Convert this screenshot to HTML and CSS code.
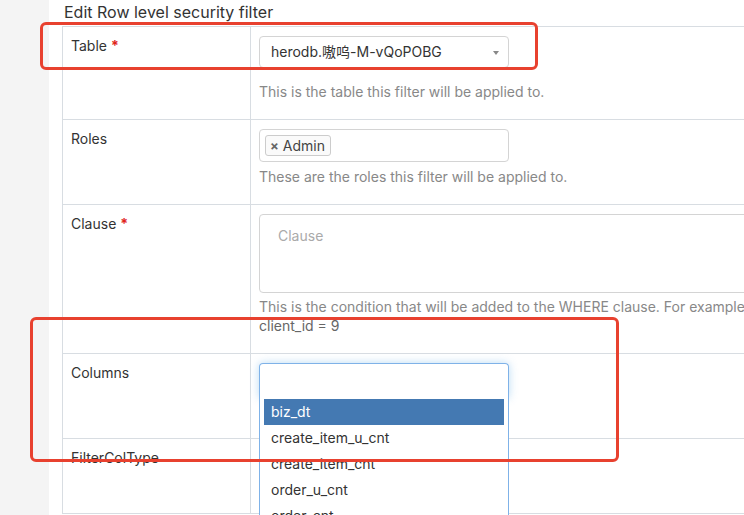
FILE: index.html
```html
<!DOCTYPE html>
<html lang="en">
<head>
    <meta charset="UTF-8">
    <meta name="viewport" content="width=device-width, initial-scale=1.0">
    <title>Edit Row level security filter</title>
    <link rel="stylesheet" href="styles.css">
</head>
<body>
    <div class="layout">
        <div class="sidebar"></div>
        <div class="main">
            <h4 class="title">Edit Row level security filter</h4>
            <table class="form-table">
                <colgroup>
                    <col class="col-label">
                    <col>
                </colgroup>
                <tr>
                    <th>Table <span class="req">*</span></th>
                    <td>
                        <div class="select">
                            <span>herodb.嗷呜-M-vQoPOBG</span>
                            <span class="caret"></span>
                        </div>
                        <p class="help help-table">This is the table this filter will be applied to.</p>
                    </td>
                </tr>
                <tr>
                    <th>Roles</th>
                    <td>
                        <div class="multi">
                            <span class="tag"><span class="tag-x">×</span>Admin</span>
                        </div>
                        <p class="help">These are the roles this filter will be applied to.</p>
                    </td>
                </tr>
                <tr>
                    <th>Clause <span class="req">*</span></th>
                    <td>
                        <div class="textarea">Clause</div>
                        <p class="help help-clause">
                            <span class="nowrap">This is the condition that will be added to the WHERE clause. For example, to only return rows for a particular client, you might define a regular filter with the clause</span><br>
                            <span class="code">client_id = 9</span>
                        </p>
                    </td>
                </tr>
                <tr>
                    <th>Columns</th>
                    <td>
                        <div class="multi-open">
                            <ul class="results">
                                <li class="active">biz_dt</li>
                                <li>create_item_u_cnt</li>
                                <li>create_item_cnt</li>
                                <li>order_u_cnt</li>
                                <li>order_cnt</li>
                                <li>pay_u_cnt</li>
                            </ul>
                        </div>
                    </td>
                </tr>
                <tr>
                    <th>FilterColType</th>
                    <td>
                        <div class="select select-last">
                            <span></span>
                            <span class="caret"></span>
                        </div>
                    </td>
                </tr>
            </table>
        </div>

        <!-- annotation boxes drawn over the screenshot -->
        <div class="mark mark-table"></div>
        <div class="mark mark-columns"></div>
    </div>
</body>
</html>
```

FILE: styles.css
```css
html, body {
    margin: 0;
    padding: 0;
    overflow: hidden;
    background: #fff;
}
body {
    font-family: Inter, "Noto Sans CJK SC", sans-serif;
    color: #333;
}
.layout {
    position: relative;
    display: flex;
    min-height: 515px;
}
.sidebar {
    width: 49px;
    flex: none;
    background-color: #f4f4f4;
}
.main {
    flex: none;
    padding: 2px 0 0 13px;
}
.title {
    margin: 0 0 4px 2px;
    font-size: 16px;
    font-weight: 400;
    line-height: 20px;
    color: #333;
}
.form-table {
    width: 820px;
    table-layout: fixed;
    border-collapse: collapse;
    font-size: 14px;
}
.col-label {
    width: 188px;
}
.form-table th, .form-table td {
    border: 1px solid #d8dde2;
    padding: 9px 8px;
    vertical-align: top;
    text-align: left;
    line-height: 20px;
}
.form-table th {
    font-weight: 400;
}
.req {
    color: #e0241b;
    font-weight: 700;
}
.select {
    position: relative;
    width: 237px;
    height: 30px;
    padding-left: 11px;
    border: 1px solid #d4d4d4;
    border-radius: 4px;
    line-height: 30px;
    color: #333;
}
.caret {
    position: absolute;
    right: 9px;
    top: 14px;
    border-left: 3px solid transparent;
    border-right: 3px solid transparent;
    border-top: 4px solid #888;
}
.select-last {
    margin-bottom: 24px;
}
.help {
    margin: 5px 0 8px;
    font-size: 14px;
    line-height: 20px;
    color: #888;
}
.help-table {
    margin-top: 14px;
}
.help-clause {
    margin: 4px 0 9px;
    line-height: 19px;
}
.nowrap {
    white-space: nowrap;
}
.code {
    color: #666;
}
.multi {
    width: 248px;
    height: 31px;
    border: 1px solid #d4d4d4;
    border-radius: 4px;
}
.tag {
    display: inline-block;
    margin: 5px 0 0 5px;
    padding: 0 5px 0 4px;
    height: 19px;
    line-height: 19px;
    border: 1px solid #ccc;
    border-radius: 3px;
    background: #fafafa;
    font-size: 14px;
    color: #444;
}
.tag-x {
    margin-right: 4px;
    font-weight: 700;
    color: #666;
    font-size: 13px;
}
.textarea {
    height: 55px;
    padding: 11px 18px;
    border: 1px solid #d4d4d4;
    border-radius: 4px;
    font-size: 14px;
    color: #aaa;
}
.multi-open {
    position: relative;
    width: 248px;
    height: 34px;
    margin-bottom: 31px;
    border: 1px solid #7fb2e8;
    border-bottom: none;
    border-radius: 4px 4px 0 0;
    box-shadow: 0 0 8px rgba(102, 175, 233, 0.45);
}
.results {
    position: absolute;
    z-index: 2;
    top: 34px;
    left: -1px;
    width: 240px;
    margin: 0;
    padding: 1px 4px 0;
    list-style: none;
    border: 1px solid #7fb2e8;
    border-top: none;
    background: #fff;
}
.results li {
    height: 26px;
    line-height: 25px;
    padding-left: 7px;
    color: #333;
}
.results li.active {
    background-color: #4479b2;
    color: #fff;
}
.mark {
    position: absolute;
    z-index: 3;
    border: 3px solid #e8412f;
    border-radius: 6px;
}
.mark-table {
    left: 40px;
    top: 22px;
    width: 492px;
    height: 42px;
}
.mark-columns {
    left: 30px;
    top: 317px;
    width: 583px;
    height: 139px;
}
```
